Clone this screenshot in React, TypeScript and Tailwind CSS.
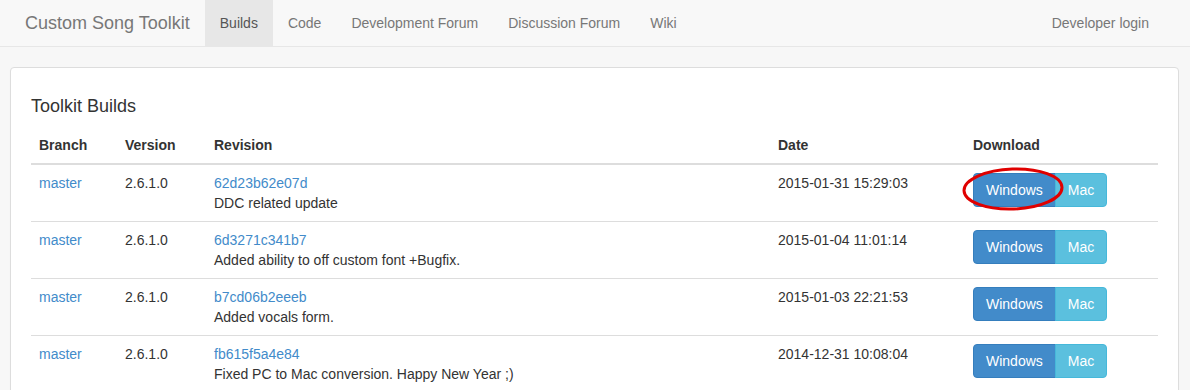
const navLinks = ["Builds", "Code", "Development Forum", "Discussion Forum", "Wiki"];

const builds = [
  { rev: "62d23b62e07d", msg: "DDC related update", date: "2015-01-31 15:29:03", marked: true },
  { rev: "6d3271c341b7", msg: "Added ability to off custom font +Bugfix.", date: "2015-01-04 11:01:14" },
  { rev: "b7cd06b2eeeb", msg: "Added vocals form.", date: "2015-01-03 22:21:53" },
  { rev: "fb615f5a4e84", msg: "Fixed PC to Mac conversion. Happy New Year ;)", date: "2014-12-31 10:08:04" },
];

function DownloadButtons({ marked }: { marked?: boolean }) {
  return (
    <div className="relative inline-flex">
      <button className="h-[34px] px-3 bg-[#428bca] border border-[#357ebd] text-white text-[14px] rounded-l-[4px]">
        Windows
      </button>
      <button className="h-[34px] px-3 -ml-px bg-[#5bc0de] border border-[#46b8da] text-white text-[14px] rounded-r-[4px]">
        Mac
      </button>
      {marked && (
        <svg className="absolute -left-[12px] -top-[7px] pointer-events-none" width="104" height="48" viewBox="0 0 104 48">
          <ellipse cx="52" cy="23" rx="49" ry="20" fill="none" stroke="#e00000" strokeWidth="3" transform="rotate(-2 52 23)" />
        </svg>
      )}
    </div>
  );
}

export default function App() {
  return (
    <div className="min-h-screen bg-[#f7f7f7] text-[14px] text-[#333]" style={{ fontFamily: '"Liberation Sans", Arial, sans-serif' }}>
      {/* Navbar */}
      <nav className="h-[47px] bg-[#f8f8f8] border-b border-[#e7e7e7] flex items-stretch">
        <div className="pl-[25px] pr-[15px] flex items-center text-[18px] text-[#777]">Custom Song Toolkit</div>
        <ul className="flex">
          {navLinks.map((l, i) => (
            <li
              key={l}
              className={`px-[15px] flex items-center leading-5 ${i === 0 ? "bg-[#e7e7e7] text-[#555]" : "text-[#777]"}`}
            >
              {l}
            </li>
          ))}
        </ul>
        <div className="ml-auto pr-[41px] flex items-center text-[#777]">Developer login</div>
      </nav>

      {/* Panel */}
      <div className="pt-5 pl-[10px] pr-[11px]">
        <div className="bg-white border border-[#ddd] rounded-[4px] shadow-[0_1px_1px_rgba(0,0,0,0.05)] px-5 pt-[28px] pb-5">
          <h3 className="text-[18px] leading-5 mb-[11px]">Toolkit Builds</h3>
          <table className="w-full border-collapse text-left">
            <thead>
              <tr className="border-b-2 border-[#ddd]">
                <th className="w-[86px] p-2 leading-5 font-bold">Branch</th>
                <th className="w-[89px] p-2 leading-5 font-bold">Version</th>
                <th className="w-[564px] p-2 leading-5 font-bold">Revision</th>
                <th className="w-[195px] p-2 leading-5 font-bold">Date</th>
                <th className="p-2 leading-5 font-bold">Download</th>
              </tr>
            </thead>
            <tbody>
              {builds.map((b) => (
                <tr key={b.rev} className="border-b border-[#ddd] align-top">
                  <td className="p-2 leading-5 text-[#428bca]">master</td>
                  <td className="p-2 leading-5">2.6.1.0</td>
                  <td className="p-2 leading-5">
                    <div className="text-[#428bca]">{b.rev}</div>
                    <div>{b.msg}</div>
                  </td>
                  <td className="p-2 leading-5">{b.date}</td>
                  <td className="p-2 leading-5">
                    <DownloadButtons marked={b.marked} />
                  </td>
                </tr>
              ))}
            </tbody>
          </table>
        </div>
      </div>
    </div>
  );
}
